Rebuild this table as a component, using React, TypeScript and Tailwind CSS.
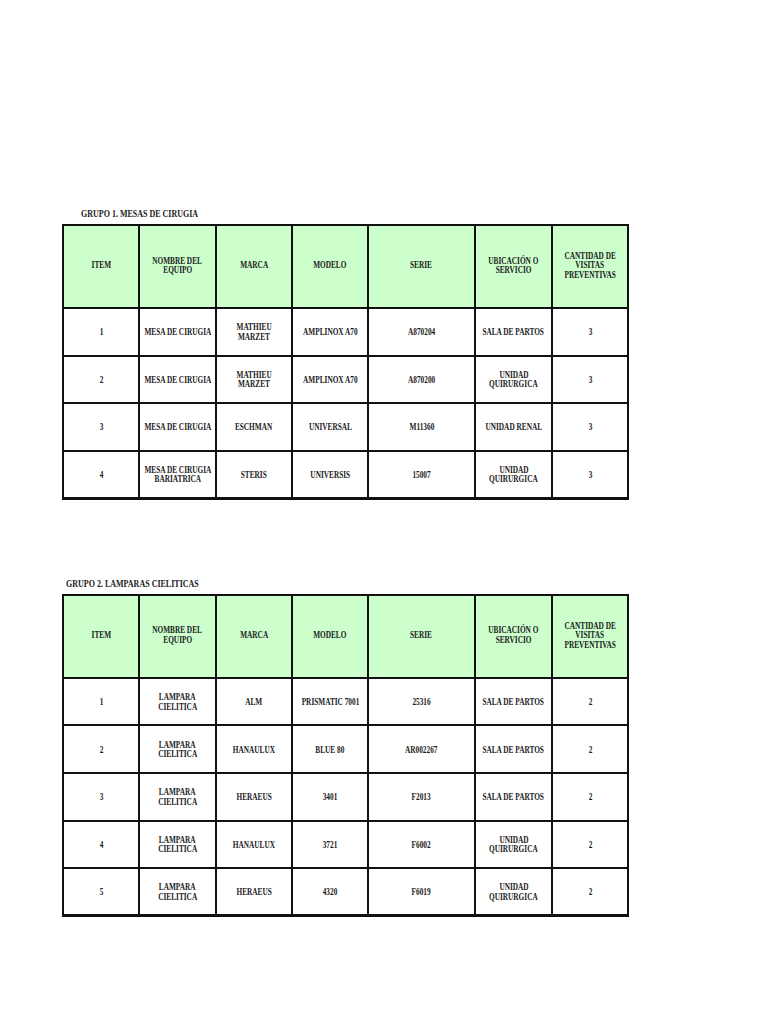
import React from "react";

type Row = { item: string; nombre: string[]; marca: string[]; modelo: string; serie: string; ubicacion: string[]; visitas: string };

const grupo1: Row[] = [
  { item: "1", nombre: ["MESA DE CIRUGIA"], marca: ["MATHIEU", "MARZET"], modelo: "AMPLINOX A70", serie: "A870204", ubicacion: ["SALA DE PARTOS"], visitas: "3" },
  { item: "2", nombre: ["MESA DE CIRUGIA"], marca: ["MATHIEU", "MARZET"], modelo: "AMPLINOX A70", serie: "A870200", ubicacion: ["UNIDAD", "QUIRURGICA"], visitas: "3" },
  { item: "3", nombre: ["MESA DE CIRUGIA"], marca: ["ESCHMAN"], modelo: "UNIVERSAL", serie: "M11360", ubicacion: ["UNIDAD RENAL"], visitas: "3" },
  { item: "4", nombre: ["MESA DE CIRUGIA", "BARIATRICA"], marca: ["STERIS"], modelo: "UNIVERSIS", serie: "15007", ubicacion: ["UNIDAD", "QUIRURGICA"], visitas: "3" },
];

const grupo2: Row[] = [
  { item: "1", nombre: ["LAMPARA", "CIELITICA"], marca: ["ALM"], modelo: "PRISMATIC 7001", serie: "25316", ubicacion: ["SALA DE PARTOS"], visitas: "2" },
  { item: "2", nombre: ["LAMPARA", "CIELITICA"], marca: ["HANAULUX"], modelo: "BLUE 80", serie: "AR002267", ubicacion: ["SALA DE PARTOS"], visitas: "2" },
  { item: "3", nombre: ["LAMPARA", "CIELITICA"], marca: ["HERAEUS"], modelo: "3401", serie: "F2013", ubicacion: ["SALA DE PARTOS"], visitas: "2" },
  { item: "4", nombre: ["LAMPARA", "CIELITICA"], marca: ["HANAULUX"], modelo: "3721", serie: "F6002", ubicacion: ["UNIDAD", "QUIRURGICA"], visitas: "2" },
  { item: "5", nombre: ["LAMPARA", "CIELITICA"], marca: ["HERAEUS"], modelo: "4320", serie: "F6019", ubicacion: ["UNIDAD", "QUIRURGICA"], visitas: "2" },
];

const cell = "border-2 border-[#111] align-middle p-0 leading-[9.5px]";
const head = "border-2 border-[#111] align-middle p-0 pb-[3px] leading-[9.5px]";

// Cambria-like narrow look: squeeze the serif horizontally
function Lines({ lines }: { lines: string[] }) {
  return (
    <div className="flex flex-col items-center">
      {lines.map((l, i) => (
        <span key={i} className="whitespace-nowrap scale-x-[0.73]">{l}</span>
      ))}
    </div>
  );
}

function Tabla({ rows }: { rows: Row[] }) {
  return (
    <table className="table-fixed border-collapse w-[565px] border-b-[3px] border-[#111]">
      <colgroup>
        <col className="w-[76px]" />
        <col className="w-[77px]" />
        <col className="w-[76px]" />
        <col className="w-[76px]" />
        <col className="w-[107px]" />
        <col className="w-[77px]" />
        <col className="w-[76px]" />
      </colgroup>
      <thead>
        <tr className="h-[83px] bg-[#ccffcc]">
          <th className={head}><Lines lines={["ITEM"]} /></th>
          <th className={head}><Lines lines={["NOMBRE DEL", "EQUIPO"]} /></th>
          <th className={head}><Lines lines={["MARCA"]} /></th>
          <th className={head}><Lines lines={["MODELO"]} /></th>
          <th className={head}><Lines lines={["SERIE"]} /></th>
          <th className={head}><Lines lines={["UBICACIÓN O", "SERVICIO"]} /></th>
          <th className={head}><Lines lines={["CANTIDAD DE", "VISITAS", "PREVENTIVAS"]} /></th>
        </tr>
      </thead>
      <tbody>
        {rows.map((r) => (
          <tr key={r.item} className="h-[47.6px]">
            <td className={cell}><Lines lines={[r.item]} /></td>
            <td className={cell}><Lines lines={r.nombre} /></td>
            <td className={cell}><Lines lines={r.marca} /></td>
            <td className={cell}><Lines lines={[r.modelo]} /></td>
            <td className={cell}><Lines lines={[r.serie]} /></td>
            <td className={cell}><Lines lines={r.ubicacion} /></td>
            <td className={cell}><Lines lines={[r.visitas]} /></td>
          </tr>
        ))}
      </tbody>
    </table>
  );
}

export default function App() {
  return (
    <div className="w-[768px] h-[1024px] bg-white text-[#1a1a1a] font-['Liberation_Serif',serif] font-bold text-[10px] pt-[208px] pl-[62px]">
      <h2 className="ml-[19px] leading-[12px] mb-[4px]">
        <span className="inline-block whitespace-nowrap origin-left scale-x-[0.8]">GRUPO 1. MESAS DE CIRUGIA</span>
      </h2>
      <Tabla rows={grupo1} />
      <h2 className="ml-[4px] mt-[78px] leading-[12px] mb-[4px]">
        <span className="inline-block whitespace-nowrap origin-left scale-x-[0.8]">GRUPO 2. LAMPARAS CIELITICAS</span>
      </h2>
      <Tabla rows={grupo2} />
    </div>
  );
}
